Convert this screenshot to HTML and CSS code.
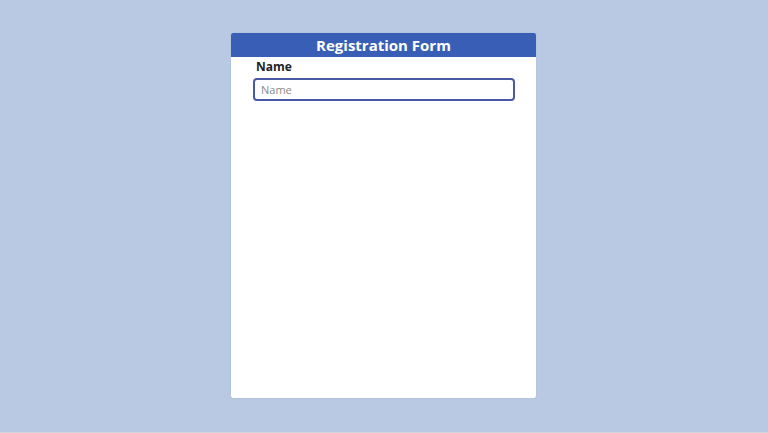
FILE: index.html
```html
<!DOCTYPE html>
<html lang="en">
<head>
<meta charset="utf-8">
<title>Registration Form</title>
<link rel="stylesheet" href="styles.css">
</head>
<body>
<div class="screen">
  <div class="card">
    <div class="card-header">Registration Form</div>
    <div class="card-body">
      <label class="field-label" for="name">Name</label>
      <input class="field-input" id="name" type="text" placeholder="Name">
    </div>
  </div>
</div>
</body>
</html>
```
FILE: styles.css
```css
html, body {
  margin: 0;
  padding: 0;
  width: 768px;
  height: 433px;
  overflow: hidden;
  font-family: "Open Sans", "Noto Sans", sans-serif;
}
.screen {
  box-sizing: border-box;
  width: 768px;
  height: 433px;
  background: #bac9e3;
  border-bottom: 1px solid #d3d6dc;
  padding-top: 33px;
  display: flex;
  justify-content: center;
}
.card {
  margin-left: -1px;
  width: 305px;
  height: 365px;
  background: #ffffff;
  border-radius: 2px;
  box-shadow: 0 0 1px rgba(0,0,0,0.25);
  display: flex;
  flex-direction: column;
  overflow: hidden;
}
.card-header {
  height: 24px;
  background: #385fb5;
  color: #ffffff;
  font-weight: 700;
  font-size: 15px;
  line-height: 24px;
  text-align: center;
}
.card-body {
  display: flex;
  flex-direction: column;
  padding: 2px 0 0 22px;
}
.field-label {
  font-size: 12px;
  font-weight: 700;
  color: #222222;
  line-height: 16px;
  padding-left: 3px;
  margin-bottom: 3px;
}
.field-input {
  box-sizing: border-box;
  width: 262px;
  height: 23px;
  border: 2px solid #4b59a4;
  border-radius: 4px;
  padding: 0 6px;
  font-family: "Open Sans", "Noto Sans", sans-serif;
  font-size: 11px;
  color: #333;
  outline: none;
}
.field-input::placeholder {
  color: #8a8a8a;
}
```
